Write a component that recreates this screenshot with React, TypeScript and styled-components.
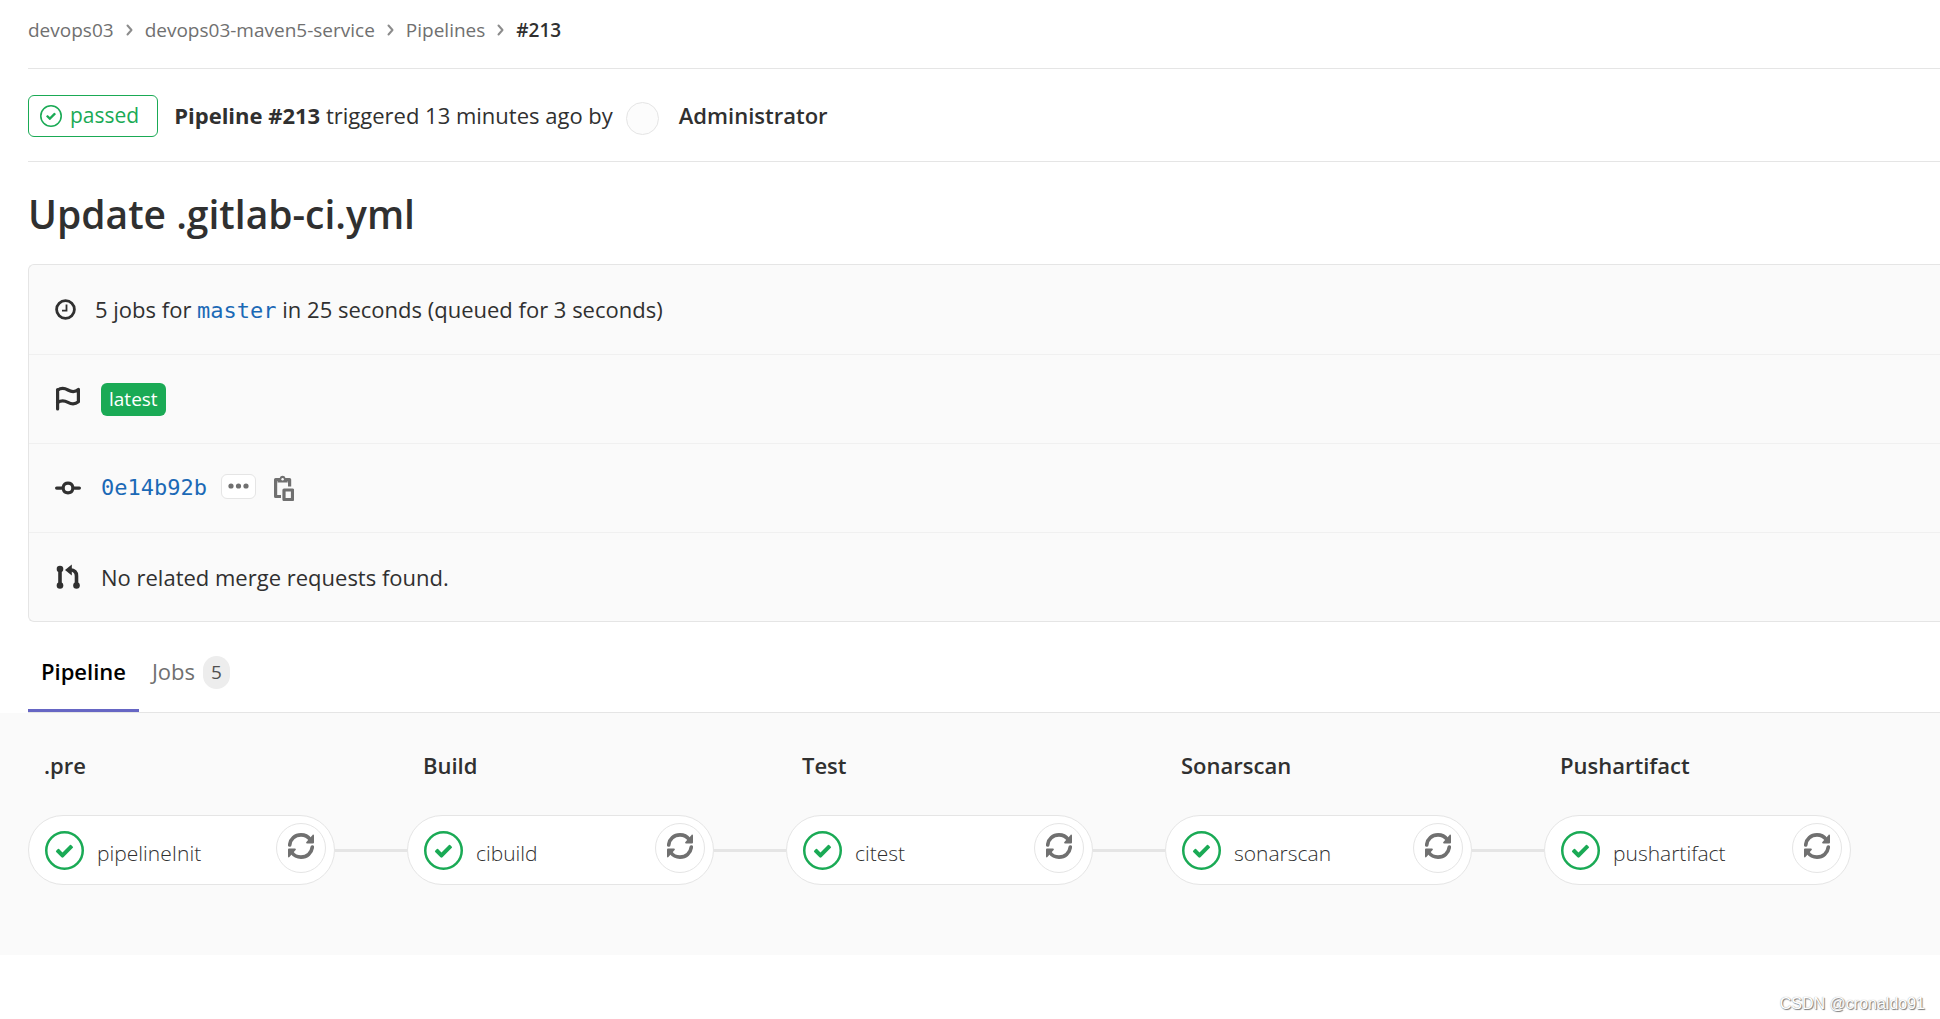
import React from "react";
import styled, { createGlobalStyle, css } from "styled-components";

const sans = `"Open Sans", "Noto Sans", sans-serif`;
const mono = `"DejaVu Sans Mono", monospace`;

const GlobalStyle = createGlobalStyle`
  *, *::before, *::after { box-sizing: border-box; }
  body {
    margin: 0;
    background: #fff;
    color: #303030;
    font-family: ${sans};
    font-size: 22px;
    line-height: 32px;
    overflow-x: hidden;
  }
  a { color: inherit; text-decoration: none; }
  button { font: inherit; margin: 0; padding: 0; cursor: pointer; }
  svg { display: block; flex: none; }
`;

const Page = styled.div`
  display: flex;
  flex-direction: column;
`;

const Content = styled.main`
  display: flex;
  flex-direction: column;
`;

const Breadcrumbs = styled.nav`
  margin-left: 28px;
  padding: 14px 0 22px;
  border-bottom: 1px solid #e5e5e5;
  ol {
    display: flex;
    align-items: center;
    margin: 0;
    padding: 0;
    list-style: none;
  }
  li {
    display: flex;
    align-items: center;
    color: #707070;
    font-size: 19px;
  }
  li:last-child {
    color: #303030;
    font-weight: 600;
  }
  svg { margin: 0 11px; }
`;

const Header = styled.header`
  display: flex;
  align-items: center;
  margin-left: 28px;
  height: 93px;
  padding-top: 2px;
  border-bottom: 1px solid #e5e5e5;
`;

const Status = styled.a`
  display: flex;
  align-items: center;
  gap: 8px;
  height: 42px;
  padding: 0 18px 0 11px;
  margin-right: 16px;
  border: 1px solid #1aaa55;
  border-radius: 6px;
  && { color: #1aaa55; }
  span {
    padding-bottom: 2px;
    font-size: 21px;
  }
`;

const HeaderText = styled.div`
  display: flex;
  align-items: center;
  padding-bottom: 2px;
  strong { font-weight: 700; }
`;

const Avatar = styled.span`
  width: 33px;
  height: 33px;
  margin: 6px 20px 0 13px;
  border: 1px solid #e5e5e5;
  border-radius: 50%;
  background: #fcfcfc;
`;

const Author = styled.a`
  font-weight: 600;
`;

const Title = styled.h1`
  margin: 26px 0 24px 28px;
  font-size: 39px;
  line-height: 52px;
  font-weight: 600;
`;

const InfoBox = styled.section`
  margin-left: 28px;
  border: 1px solid #e5e5e5;
  border-right: 0;
  border-radius: 6px 0 0 6px;
  background: #fafafa;
`;

const InfoRow = styled.div`
  display: flex;
  align-items: center;
  min-height: 89px;
  padding-left: 26px;
  & + & { border-top: 1px solid #f0f0f0; }
`;

const IconSlot = styled.span<{ $w: number }>`
  flex: none;
  width: ${(p) => p.$w}px;
`;

const Code = styled.a`
  font-family: ${mono};
  && { color: #1b69b6; }
`;

const Tag = styled.span`
  padding: 0 8px;
  border-radius: 6px;
  background: #1aaa55;
  color: #fff;
  font-size: 19px;
  line-height: 33px;
`;

const MoreButton = styled.button`
  display: grid;
  place-items: center;
  width: 35px;
  height: 25px;
  margin: 0 18px 4px 14px;
  border: 1px solid #e5e5e5;
  border-radius: 6px;
  background: #fff;
  color: #707070;
`;

const PlainButton = styled.button`
  border: 0;
  background: none;
  color: #707070;
`;

const Tabs = styled.div`
  display: flex;
  margin: 18px 0 0 28px;
  height: 73px;
  border-bottom: 1px solid #e5e5e5;
`;

const Tab = styled.button<{ $active?: boolean }>`
  display: flex;
  align-items: center;
  gap: 8px;
  padding: 0 13px 11px;
  border: 0;
  background: none;
  color: #707070;
  ${(p) =>
    p.$active &&
    css`
      padding-bottom: 8px;
      border-bottom: 3px solid #6666c4;
      color: #000;
      font-weight: 600;
    `}
`;

const Count = styled.span`
  margin-top: 4px;
  padding: 0 8px;
  border-radius: 16px;
  background: #ededed;
  color: #505050;
  font-size: 19px;
  line-height: 33px;
`;

const Graph = styled.section`
  display: flex;
  padding: 36px 28px 70px;
  background: #fafafa;
  overflow: hidden;
`;

const Stage = styled.div`
  flex: none;
  width: 379px;
`;

const StageName = styled.h2`
  margin: 0 0 34px 16px;
  font-size: 22px;
  line-height: 32px;
  font-weight: 600;
`;

const JobRow = styled.div`
  display: flex;
  align-items: center;
`;

const Connector = styled.span`
  flex: 1;
  height: 3px;
  background: #e5e5e5;
`;

const Job = styled.div`
  display: flex;
  align-items: center;
  width: 307px;
  height: 70px;
  padding: 0 8px 0 16px;
  border: 1px solid #e5e5e5;
  border-radius: 35px;
  background: #fff;
`;

const JobLink = styled.a`
  display: flex;
  flex: 1;
  align-items: center;
  gap: 13px;
  font-size: 21px;
  font-weight: 300;
  svg { color: #1aaa55; }
  span { padding-top: 6px; }
`;

const RetryButton = styled.button`
  display: grid;
  place-items: center;
  width: 50px;
  height: 50px;
  margin-bottom: 5px;
  padding-bottom: 4px;
  border: 1px solid #e5e5e5;
  border-radius: 50%;
  background: #fff;
  color: #707070;
`;

const Watermark = styled.footer`
  padding: 37px 15px 0;
  text-align: right;
  font-family: "Liberation Sans", Arial, sans-serif;
  font-size: 16px;
  line-height: 24px;
  color: #fff;
  text-shadow: 1px 1px 1px #777, 0 0 1px #999;
`;

const Chevron = () => (
  <svg width="9" height="12" viewBox="0 0 9 12" fill="none" stroke="#8c8c8c" strokeWidth="2" strokeLinecap="round" strokeLinejoin="round">
    <path d="M2.5 1.5 6.5 6l-4 4.5" />
  </svg>
);

const SuccessIcon = ({ size, ring }: { size: number; ring: number }) => (
  <svg width={size} height={size} viewBox="0 0 14 14" fill="currentColor">
    <circle cx="7" cy="7" r={7 - ring / 2} fill="none" stroke="currentColor" strokeWidth={ring} />
    <path d="M6.278 7.697L5.045 6.464a.296.296 0 0 0-.42-.002l-.613.614a.298.298 0 0 0 .002.42l1.91 1.909a.5.5 0 0 0 .703.005l.265-.265L9.997 6.04a.291.291 0 0 0-.009-.408l-.614-.614a.29.29 0 0 0-.408-.009L6.278 7.697z" />
  </svg>
);

const ClockIcon = () => (
  <svg width="21" height="21" viewBox="0 0 21 21" fill="none" stroke="currentColor">
    <circle cx="10.5" cy="10.5" r="8.9" strokeWidth="2.8" />
    <path d="M11.5 5.500v6.200H7" strokeWidth="1.8" />
  </svg>
);

const FlagIcon = () => (
  <svg width="26" height="26" viewBox="0 0 26 26" fill="none" stroke="currentColor" strokeWidth="3.200" strokeLinecap="round" strokeLinejoin="round">
    <path d="M2.600 3.500v19.500M2.600 4.200c3.500-2.600 6.500-2.400 10.400-.2s7 2.400 10.400-.6v12.400c-3.400 2.800-6.500 2.800-10.400.6s-6.900-2.400-10.400.2" />
  </svg>
);

const CommitIcon = () => (
  <svg width="26" height="26" viewBox="0 0 16 16" fill="currentColor">
    <path d="M8 10a2 2 0 1 0 0-4 2 2 0 0 0 0 4zm3.876-1.008a4.002 4.002 0 0 1-7.752 0A1.01 1.01 0 0 1 4 9H1a1 1 0 1 1 0-2h3c.042 0 .083.003.124.008a4.002 4.002 0 0 1 7.752 0A1.01 1.01 0 0 1 12 7h3a1 1 0 0 1 0 2h-3a1.01 1.01 0 0 1-.124-.008z" />
  </svg>
);

const MergeIcon = () => (
  <svg width="26" height="26" viewBox="0 0 26 26" fill="currentColor">
    <circle cx="5" cy="5" r="3.300" />
    <circle cx="5" cy="21.500" r="3.300" />
    <circle cx="21.500" cy="21.500" r="3.300" />
    <path d="M5 5v16.500M15 5.800c4.500.2 6.500 2.500 6.500 6.200v9.500" fill="none" stroke="currentColor" strokeWidth="3.600" />
    <path d="M16.800.6v10.800L10 6z" />
  </svg>
);

const DotsIcon = () => (
  <svg width="21" height="6" viewBox="0 0 21 6" fill="currentColor">
    <circle cx="3" cy="3" r="2.600" />
    <circle cx="10.500" cy="3" r="2.600" />
    <circle cx="18" cy="3" r="2.600" />
  </svg>
);

const CopyIcon = () => (
  <svg width="20" height="26" viewBox="0 0 20 26" fill="none" stroke="currentColor">
    <path d="M7 21.500H1.600V4.500h14v7" strokeWidth="3.200" strokeLinejoin="round" />
    <path d="M3.500 3h2.200a3 3 0 0 1 5.800 0h2.200v4.500H3.500z" fill="currentColor" stroke="none" />
    <circle cx="8.600" cy="4.200" r="1.200" fill="#fafafa" stroke="none" />
    <rect x="10" y="15" width="8.500" height="9.500" strokeWidth="3.200" strokeLinejoin="round" />
  </svg>
);

const RetryIcon = () => (
  <svg width="26" height="26" viewBox="0 0 26 26" fill="currentColor">
    <path d="M1.700 12C2.300 6 7 1.900 13 1.900c4 0 7 1.600 9.200 4.600M24.300 14C23.700 20 19 24.100 13 24.100c-4 0-7-1.600-9.200-4.600" fill="none" stroke="currentColor" strokeWidth="3.600" strokeLinecap="round" />
    <path d="M26 2.500v7a1 1 0 0 1-1 1h-6a.8.8 0 0 1-.6-1.400l6.200-7.200c.500-.6 1.400-.2 1.400.6zM0 23.500v-7a1 1 0 0 1 1-1h6a.8.8 0 0 1 .6 1.400l-6.200 7.200c-.5.6-1.400.2-1.400-.6z" />
  </svg>
);

const trail = ["devops03", "devops03-maven5-service", "Pipelines"];

const stages = [
  { name: ".pre", job: "pipelineInit" },
  { name: "Build", job: "cibuild" },
  { name: "Test", job: "citest" },
  { name: "Sonarscan", job: "sonarscan" },
  { name: "Pushartifact", job: "pushartifact" },
];

export default function App() {
  return (
    <Page>
      <GlobalStyle />
      <Content>
        <Breadcrumbs aria-label="Breadcrumbs">
          <ol>
            {trail.map((t) => (
              <li key={t}>
                <a href="#">{t}</a>
                <Chevron />
              </li>
            ))}
            <li>
              <a href="#">#213</a>
            </li>
          </ol>
        </Breadcrumbs>
        <Header>
          <Status href="#">
            <SuccessIcon size={22} ring={1} />
            <span>passed</span>
          </Status>
          <HeaderText>
            <span>
              <strong>Pipeline #213</strong> triggered 13 minutes ago by
            </span>
            <Avatar />
            <Author href="#">Administrator</Author>
          </HeaderText>
        </Header>
        <Title>Update .gitlab-ci.yml</Title>
        <InfoBox>
          <InfoRow>
            <IconSlot $w={40}>
              <ClockIcon />
            </IconSlot>
            <span>
              5 jobs for <Code href="#">master</Code> in 25 seconds (queued for 3 seconds)
            </span>
          </InfoRow>
          <InfoRow>
            <IconSlot $w={46}>
              <FlagIcon />
            </IconSlot>
            <Tag>latest</Tag>
          </InfoRow>
          <InfoRow>
            <IconSlot $w={46}>
              <CommitIcon />
            </IconSlot>
            <Code href="#">0e14b92b</Code>
            <MoreButton aria-label="Toggle commit description">
              <DotsIcon />
            </MoreButton>
            <PlainButton aria-label="Copy commit SHA">
              <CopyIcon />
            </PlainButton>
          </InfoRow>
          <InfoRow>
            <IconSlot $w={46}>
              <MergeIcon />
            </IconSlot>
            <span>No related merge requests found.</span>
          </InfoRow>
        </InfoBox>
        <Tabs role="tablist">
          <Tab role="tab" aria-selected="true" $active>
            Pipeline
          </Tab>
          <Tab role="tab" aria-selected="false">
            Jobs <Count>5</Count>
          </Tab>
        </Tabs>
        <Graph>
          {stages.map((s, i) => (
            <Stage key={s.name}>
              <StageName>{s.name}</StageName>
              <JobRow>
                <Job>
                  <JobLink href="#">
                    <SuccessIcon size={39} ring={0.9} />
                    <span>{s.job}</span>
                  </JobLink>
                  <RetryButton aria-label={`Retry ${s.job}`}>
                    <RetryIcon />
                  </RetryButton>
                </Job>
                {i < stages.length - 1 && <Connector />}
              </JobRow>
            </Stage>
          ))}
        </Graph>
      </Content>
      <Watermark>CSDN @cronaldo91</Watermark>
    </Page>
  );
}
